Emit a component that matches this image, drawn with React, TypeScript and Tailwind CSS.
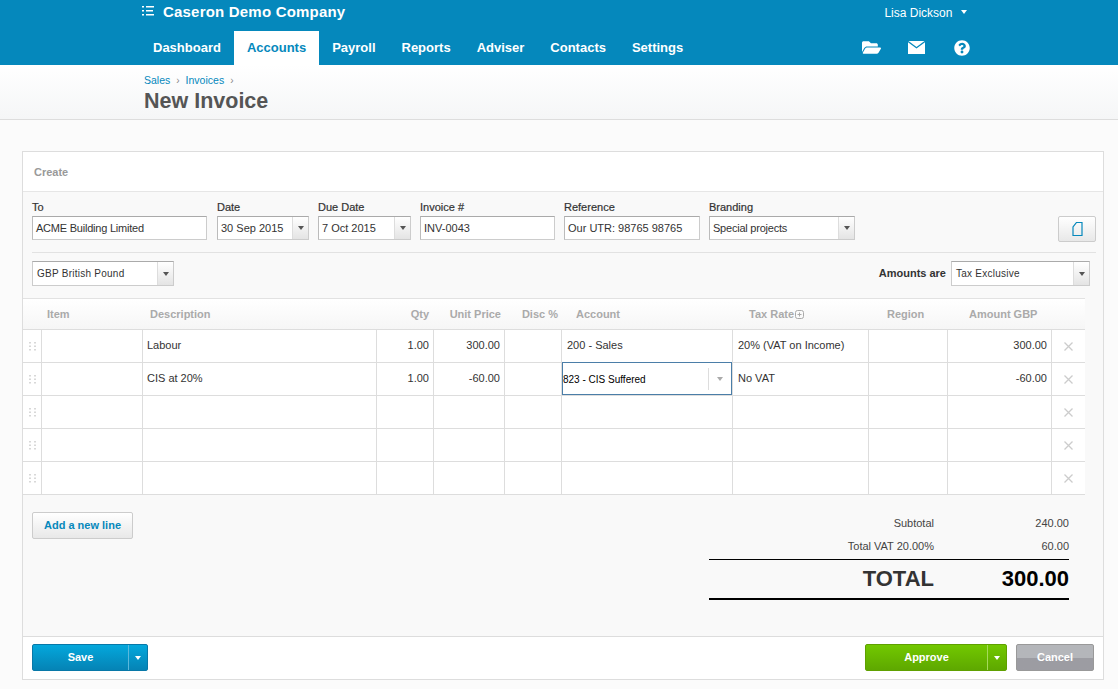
import { FaFolderOpen, FaQuestionCircle } from 'react-icons/fa';

const NAV = ['Dashboard', 'Accounts', 'Payroll', 'Reports', 'Adviser', 'Contacts', 'Settings'];
const COLS = 'grid grid-cols-[19px_101px_234px_57px_71px_57px_171px_136px_79px_104px_33px]';

const ROWS = [
  { desc: 'Labour', qty: '1.00', price: '300.00', account: '200 - Sales', tax: '20% (VAT on Income)', amount: '300.00' },
  { desc: 'CIS at 20%', qty: '1.00', price: '-60.00', account: '823 - CIS Suffered', tax: 'No VAT', amount: '-60.00', editing: true },
  { desc: '', qty: '', price: '', account: '', tax: '', amount: '' },
  { desc: '', qty: '', price: '', account: '', tax: '', amount: '' },
  { desc: '', qty: '', price: '', account: '', tax: '', amount: '' },
];

function Caret({ className = 'border-t-[#555]' }: { className?: string }) {
  return <span className={`inline-block h-0 w-0 border-x-[3px] border-t-[4px] border-x-transparent ${className}`} />;
}

function Field({ label, value, width, select, tight }: { label: string; value: string; width: string; select?: boolean; tight?: boolean }) {
  return (
    <div className={`flex flex-col ${width}`}>
      <label className="h-[16px] text-[11px] leading-[14px] text-[#333] [-webkit-text-stroke:0.2px_#333]">{label}</label>
      <div className="flex h-[24px] border border-[#ccc] border-t-[#aaa] border-l-[#bbb] bg-white text-[11px] text-[#333]">
        <span className={`flex-1 truncate pl-[3px] leading-[22px] ${tight ? 'tracking-[-0.22px]' : ''}`}>{value}</span>
        {select && (
          <span className="flex w-[16px] items-center justify-center border-l border-[#ddd] bg-gradient-to-b from-white to-[#e4e4e4]">
            <Caret />
          </span>
        )}
      </div>
    </div>
  );
}

function DropDown({ value, width }: { value: string; width: string }) {
  return (
    <div className={`flex h-[25px] border border-[#ccc] border-t-[#aaa] bg-white text-[10px] tracking-[0.25px] text-[#333] ${width}`}>
      <span className="flex-1 pl-[4px] leading-[23px]">{value}</span>
      <span className="flex w-[16px] items-center justify-center border-l border-[#ddd] bg-gradient-to-b from-white to-[#e4e4e4]">
        <Caret />
      </span>
    </div>
  );
}

function DragHandle() {
  return (
    <svg width="7" height="9" viewBox="0 0 7 9" className="fill-[#d8d8d8]">
      <rect x="0" y="0" width="2" height="1.5" />
      <rect x="5" y="0" width="2" height="1.5" />
      <rect x="0" y="3.5" width="2" height="1.5" />
      <rect x="5" y="3.5" width="2" height="1.5" />
      <rect x="0" y="7" width="2" height="1.5" />
      <rect x="5" y="7" width="2" height="1.5" />
    </svg>
  );
}

export default function App() {
  return (
    <div className="min-h-[689px] bg-[#fbfbfb] font-['Liberation_Sans',Arial,sans-serif]">
      {/* header */}
      <header className="h-[65px] bg-[#0588bc] text-white">
        <div className="flex h-[31px] items-start pl-[142px]">
          <svg width="12" height="10" viewBox="0 0 12 10" className="mt-[6px] fill-white">
            <rect x="0" y="0" width="2" height="1.5" />
            <rect x="0" y="4" width="2" height="1.5" />
            <rect x="0" y="8" width="2" height="1.5" />
            <rect x="4" y="0" width="8" height="1.5" />
            <rect x="4" y="4" width="7" height="1.5" />
            <rect x="4" y="8" width="8" height="1.5" />
          </svg>
          <span className="ml-[9px] mt-[3px] text-[15px] font-bold leading-[18px] tracking-[0.2px]">Caseron Demo Company</span>
          <span className="ml-[539px] mt-[6px] text-[12px] leading-[14px]">Lisa Dickson</span>
          <span className="ml-[9px] mt-[10px] flex"><Caret className="border-t-white" /></span>
        </div>
        <div className="flex h-[34px] pl-[140px] pr-[148px]">
          {NAV.map(n => (
            <a
              key={n}
              className={`px-[13px] text-[13px] font-bold leading-[34px] ${n === 'Accounts' ? 'bg-white text-[#0588bc]' : 'text-white'}`}
            >
              {n}
            </a>
          ))}
          <div className="ml-auto flex items-center pb-[1px]">
            <FaFolderOpen className="h-[17px] w-[19px]" />
            <svg width="17" height="13" viewBox="0 0 17 13" className="ml-[27px] fill-white">
              <path d="M0.5 0 H16.5 L8.5 6 Z" />
              <path d="M0 1.2 L8.5 7.5 L17 1.2 V13 H0 Z" />
            </svg>
            <FaQuestionCircle className="ml-[29px] h-[16px] w-[16px]" />
          </div>
        </div>
      </header>

      {/* page title */}
      <div className="h-[55px] border-b border-[#ddd] bg-gradient-to-b from-white to-[#f5f6f7] pl-[144px] pt-[9px]">
        <div className="flex items-center text-[10.5px] leading-[13px] text-[#0588bc]">
          Sales <span className="mx-[6px] text-[10px] text-[#888]">›</span> Invoices <span className="mx-[6px] text-[10px] text-[#888]">›</span>
        </div>
        <h1 className="mt-[1px] text-[21.5px] font-bold leading-[26px] text-[#555]">New Invoice</h1>
      </div>

      {/* card */}
      <div className="ml-[22px] mt-[31px] h-[529px] w-[1082px] border border-[#ddd] bg-[#f9f9f9]">
        <div className="h-[40px] border-b border-[#e6e6e6] bg-white pl-[11px] text-[11px] font-bold leading-[40px] text-[#999]">Create</div>

        <div className="pl-[9px] pr-[7px] pt-[8px]">
          <div className="flex gap-[9px]">
            <div className="mr-[1px]">
              <Field label="To" value="ACME Building Limited" width="w-[175px]" tight />
            </div>
            <Field label="Date" value="30 Sep 2015" width="w-[92px]" select />
            <Field label="Due Date" value="7 Oct 2015" width="w-[93px]" select />
            <Field label="Invoice #" value="INV-0043" width="w-[135px]" />
            <Field label="Reference" value="Our UTR: 98765 98765" width="w-[136px]" />
            <Field label="Branding" value="Special projects" width="w-[146px]" select tight />
            <button className="ml-auto mt-[16px] flex h-[26px] w-[38px] items-center justify-center rounded-[2px] border border-[#ccc] bg-gradient-to-b from-white to-[#e8e8e8]">
              <svg width="11" height="14" viewBox="0 0 11 14" className="fill-none stroke-[#0588bc]">
                <path d="M1 13.5 H10 V0.5 H4.5 L1 5 Z" strokeWidth="1.2" />
              </svg>
            </button>
          </div>
          <div className="mt-[10px] h-[1px] bg-[#e2e2e2]" />
          <div className="mt-[8px] flex items-center pr-[6px]">
            <DropDown value="GBP British Pound" width="w-[142px]" />
            <span className="ml-auto mr-[5px] text-[11px] font-bold text-[#333]">Amounts are</span>
            <DropDown value="Tax Exclusive" width="w-[139px]" />
          </div>
        </div>

        {/* lines */}
        <div className="mt-[12px] w-[1062px] border-t border-[#e2e2e2] text-[11px] text-[#333]">
          <div className={`${COLS} h-[31px] border-b border-[#ddd] bg-gradient-to-b from-white to-[#f6f6f6] text-[11px] font-bold leading-[30px] text-[#aaa]`}>
            <span />
            <span className="pl-[5px]">Item</span>
            <span className="pl-[7px]">Description</span>
            <span className="pr-[5px] text-right">Qty</span>
            <span className="pr-[4px] text-right">Unit Price</span>
            <span className="pr-[4px] text-right">Disc %</span>
            <span className="pl-[14px]">Account</span>
            <span className="flex items-center pl-[16px]">
              Tax Rate
              <svg width="9" height="9" viewBox="0 0 9 9" className="ml-[1px] fill-none stroke-[#aaa]">
                <rect x="0.5" y="0.5" width="8" height="8" rx="2" />
                <path d="M2.5 4.5 H6.5 M4.5 2.5 V6.5" />
              </svg>
            </span>
            <span className="pl-[18px]">Region</span>
            <span className="pl-[21px]">Amount GBP</span>
            <span />
          </div>
          {ROWS.map((r, i) => (
            <div key={i} className={`${COLS} h-[33px] border-b border-[#ddd] bg-white leading-[31px]`}>
              <span className="flex items-center justify-center border-r border-[#ddd]"><DragHandle /></span>
              <span className="border-r border-[#ddd]" />
              <span className="border-r border-[#ddd] pl-[4px]">{r.desc}</span>
              <span className="border-r border-[#ddd] pr-[4px] text-right">{r.qty}</span>
              <span className="border-r border-[#ddd] pr-[4px] text-right">{r.price}</span>
              <span className="border-r border-[#ddd]" />
              {r.editing ? (
                <span className="relative border-r border-[#ddd]">
                  <span className="absolute left-0 top-[-1px] z-10 flex h-[33px] w-[170px] items-center border border-[#4b7ea8] bg-white text-[10px] text-black">
                    <span className="flex-1 pt-[2px] leading-none">{r.account}</span>
                    <span className="flex h-[22px] w-[23px] items-center justify-center border-l border-[#ddd]"><Caret className="border-t-[#aaa]" /></span>
                  </span>
                </span>
              ) : (
                <span className="border-r border-[#ddd] pl-[5px]">{r.account}</span>
              )}
              <span className="border-r border-[#ddd] pl-[5px]">{r.tax}</span>
              <span className="border-r border-[#ddd]" />
              <span className="border-r border-[#ddd] pr-[4px] text-right">{r.amount}</span>
              <span className="flex items-center justify-center">
                <svg width="9" height="9" viewBox="0 0 9 9" className="stroke-[#ccc]" strokeWidth="1.3">
                  <path d="M0.5 0.5 L8.5 8.5 M8.5 0.5 L0.5 8.5" />
                </svg>
              </span>
            </div>
          ))}
        </div>

        {/* add line + totals */}
        <div className="flex h-[141px] justify-between pl-[9px] pr-[34px]">
          <button className="mt-[17px] h-[27px] w-[101px] rounded-[2px] border border-[#ccc] bg-gradient-to-b from-white to-[#e8e8e8] text-[11px] font-bold text-[#0588bc]">
            Add a new line
          </button>
          <div className="w-[360px] text-[11px] text-[#444]">
            <div className="mt-[21px] flex h-[14px] leading-[14px]">
              <span className="w-[225px] text-right">Subtotal</span>
              <span className="flex-1 text-right">240.00</span>
            </div>
            <div className="mt-[9px] flex h-[14px] leading-[14px]">
              <span className="w-[225px] text-right">Total VAT 20.00%</span>
              <span className="flex-1 text-right">60.00</span>
            </div>
            <div className="mt-[6px] flex h-[41px] items-center border-y border-y-black border-b-2 font-bold leading-none">
              <span className="w-[225px] text-right text-[22px] text-[#333]">TOTAL</span>
              <span className="flex-1 text-right text-[22px] text-black">300.00</span>
            </div>
          </div>
        </div>

        {/* footer */}
        <div className="flex h-[43px] items-start border-t border-[#ddd] bg-white px-[9px] pt-[7px]">
          <div className="flex h-[27px] w-[116px] rounded-[2px] border border-[#0878a8] bg-gradient-to-b from-[#04a8dc] to-[#0583b5] text-[11px] font-bold text-white">
            <span className="flex-1 text-center leading-[25px]">Save</span>
            <span className="flex w-[19px] items-center justify-center border-l border-[#5bb8dc]"><Caret className="border-t-white" /></span>
          </div>
          <div className="ml-auto flex h-[27px] w-[142px] rounded-[2px] border border-[#5fa000] bg-gradient-to-b from-[#72c800] to-[#5ea800] text-[11px] font-bold text-white">
            <span className="flex-1 text-center leading-[25px]">Approve</span>
            <span className="flex w-[19px] items-center justify-center border-l border-[#a5da5c]"><Caret className="border-t-white" /></span>
          </div>
          <button className="ml-[9px] h-[27px] w-[78px] rounded-[2px] border border-[#999] bg-gradient-to-b from-[#b4b6ba] from-50% to-[#9c9ca2] to-50% text-[11px] font-bold text-white">
            Cancel
          </button>
        </div>
      </div>
    </div>
  );
}
